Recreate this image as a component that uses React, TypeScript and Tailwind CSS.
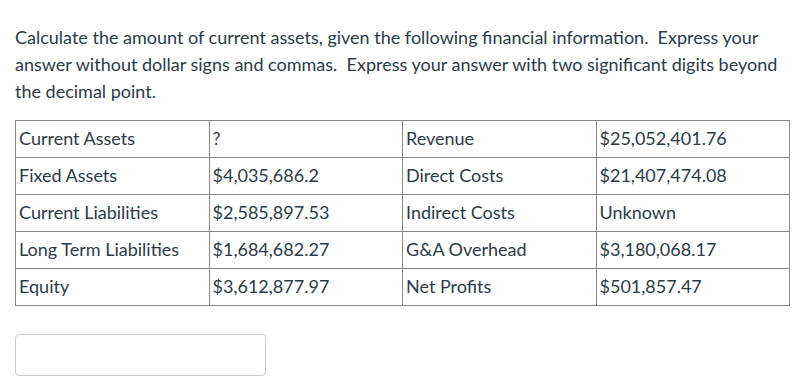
const rows: [string, string, string, string][] = [
  ['Current Assets', '?', 'Revenue', '$25,052,401.76'],
  ['Fixed Assets', '$4,035,686.2', 'Direct Costs', '$21,407,474.08'],
  ['Current Liabilities', '$2,585,897.53', 'Indirect Costs', 'Unknown'],
  ['Long Term Liabilities', '$1,684,682.27', 'G&A Overhead', '$3,180,068.17'],
  ['Equity', '$3,612,877.97', 'Net Profits', '$501,857.47'],
]

export default function App() {
  return (
    <div className="min-h-[391px] bg-white px-[15px] pt-[24px] font-['Lato','Liberation_Sans',sans-serif] text-[#2d3b45]">
      <p className="w-[775px] text-[18px] leading-[27px]">
        Calculate the amount of current assets, given the following financial information.&nbsp; Express your
        answer without dollar signs and commas.&nbsp; Express your answer with two significant digits beyond
        the decimal point.
      </p>

      <table className="mt-[15px] w-[775px] table-fixed border-collapse border border-[#888] text-[18px]">
        <tbody>
          {rows.map((row) => (
            <tr key={row[0]} className="h-[37px]">
              {row.map((cell, i) => (
                <td key={i} className="border border-[#888] px-[3px] pb-[3px] align-middle leading-[22px]">
                  {cell}
                </td>
              ))}
            </tr>
          ))}
        </tbody>
      </table>

      <input
        type="text"
        aria-label="Answer"
        className="mt-[28px] block h-[42px] w-[251px] rounded-[4px] border border-[#c7cdd1] bg-white px-2"
      />
    </div>
  )
}
